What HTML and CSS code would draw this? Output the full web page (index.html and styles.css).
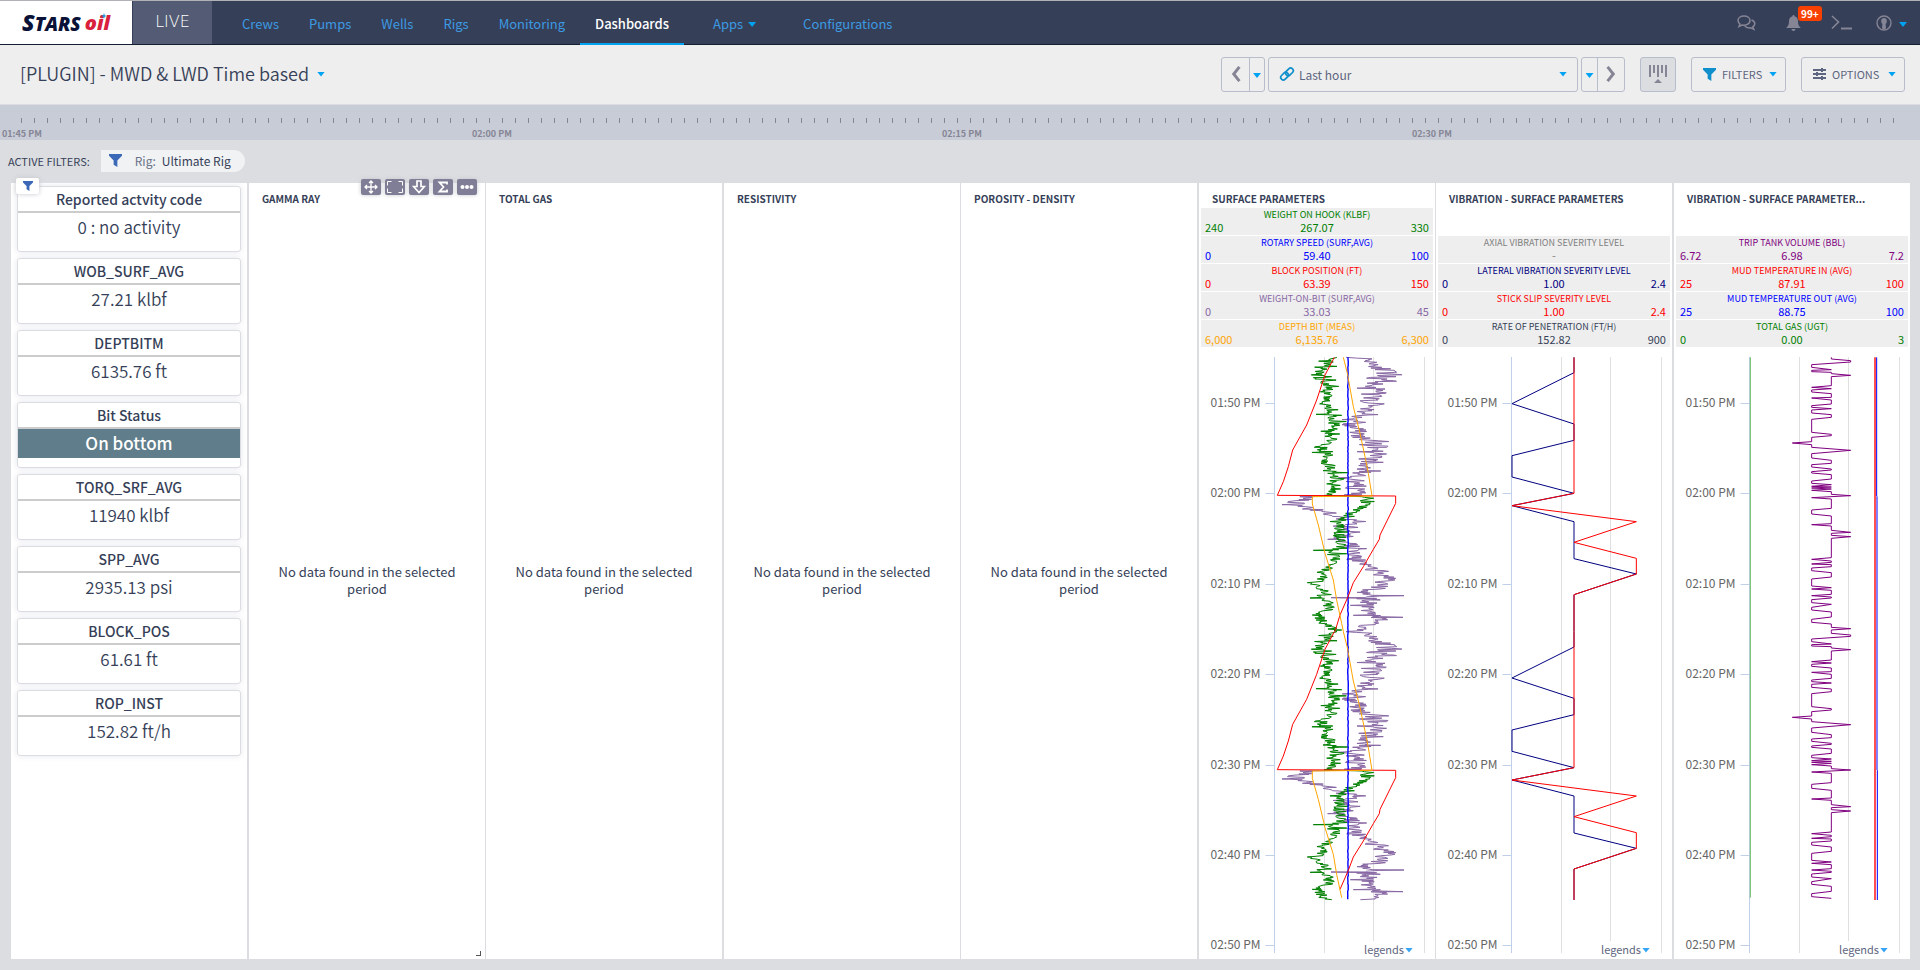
FILE: index.html
```html
<!DOCTYPE html>
<html lang="en">
<head>
<meta charset="utf-8">
<title>MWD &amp; LWD Time based</title>
<link rel="stylesheet" href="styles.css">
</head>
<body>
<svg class="defs" width="0" height="0" aria-hidden="true">
  <symbol id="funnel" viewBox="0 0 14 14"><path d="M0 0h14v2L9 7v7l-4-2.500V7L0 2z"/></symbol>
  <symbol id="left" viewBox="0 0 10 14"><path d="M8 .8 3 7l5 6.200" fill="none" stroke="currentColor" stroke-width="2.600"/></symbol>
  <symbol id="right" viewBox="0 0 10 14"><path d="M2 .8 7 7l-5 6.200" fill="none" stroke="currentColor" stroke-width="2.600"/></symbol>
</svg>

<header class="topbar">
  <a class="brand" href="#"><span class="brand-main"><span class="brand-cap">S</span>TARS</span><span class="brand-oil">oil</span>
    <svg class="brand-star" viewBox="0 0 8 8"><path d="M4 0l1 3 3 1-3 1-1 3-1-3-3-1 3-1z"/></svg></a>
  <a class="live" href="#">LIVE</a>
  <nav class="nav">
    <a href="#">Crews</a>
    <a href="#">Pumps</a>
    <a href="#">Wells</a>
    <a href="#">Rigs</a>
    <a href="#">Monitoring</a>
    <a href="#" class="active">Dashboards</a>
    <a href="#" class="apps">Apps<i class="caret"></i></a>
    <a href="#">Configurations</a>
  </nav>
  <div class="tools">
    <button type="button" aria-label="Messages"><svg width="19" height="16" viewBox="0 0 19 16" fill="none" stroke="currentColor" stroke-width="1.500"><path d="M7 1C3.500 1 1 3 1 5.500c0 1.500.8 2.700 2 3.500L2 11.500 5 10c3.500.6 8-.8 8-4.500C13 3 10.500 1 7 1z"/><path d="M14.500 5c2 .7 3.300 2 3.300 3.700 0 1.300-.8 2.300-2 3.100l1 2.500-3-1.500c-2.800.4-5-.3-6-2"/></svg></button>
    <button type="button" class="bell" aria-label="Notifications"><svg width="15" height="16" viewBox="0 0 15 16" fill="currentColor"><path d="M7.500 0c.7 0 1 .5 1 1.200C11 1.800 12 3.800 12 6c0 4 1 5 2.500 6.500v.5H.5v-.5C2 11 3 10 3 6c0-2.200 1-4.200 3.500-4.800C6.500.5 6.800 0 7.500 0zM5.500 14h4c0 1.200-.9 2-2 2s-2-.8-2-2z"/></svg><span class="badge">99+</span></button>
    <button type="button" aria-label="Console"><svg width="22" height="15" viewBox="0 0 22 15" fill="none" stroke="currentColor"><path d="M1 1l6.500 6L1 13.500" stroke-width="1.600"/><path d="M10 13.500h11" stroke-width="2"/></svg></button>
    <button type="button" class="user" aria-label="Account"><svg width="16" height="16" viewBox="0 0 16 16"><circle cx="8" cy="8" r="7" fill="none" stroke="currentColor" stroke-width="1.400"/><path d="M8 3c1.800 0 2.800 1.200 2.800 3 0 1.500-.6 2.500-1.200 3l.4 4.500-2 .7-2-.7L6.400 9c-.6-.5-1.200-1.500-1.200-3 0-1.800 1-3 2.800-3z" fill="currentColor"/></svg><i class="caret"></i></button>
  </div>
</header>

<section class="toolbar">
  <h1>[PLUGIN] - MWD &amp; LWD Time based<i class="caret"></i></h1>
  <div class="period">
    <div class="group">
      <button type="button" class="arrow" aria-label="Previous"><svg width="12" height="16"><use href="#left"/></svg></button>
      <button type="button" class="drop" aria-label="Previous options"><i class="caret"></i></button>
    </div>
    <label class="range">
      <svg width="16" height="16" viewBox="0 0 16 16" fill="none" stroke="currentColor" stroke-width="1.700"><rect x="-3.800" y="-2.600" width="8.600" height="5.200" rx="2.600" transform="translate(5.200 10.500) rotate(-45)"/><rect x="-4.800" y="-2.600" width="8.600" height="5.200" rx="2.600" transform="translate(10.800 5.500) rotate(-45)"/></svg>
      <select aria-label="Time range"><option>Last hour</option></select>
      <i class="caret"></i>
    </label>
    <div class="group">
      <button type="button" class="drop" aria-label="Next options"><i class="caret"></i></button>
      <button type="button" class="arrow" aria-label="Next"><svg width="12" height="16"><use href="#right"/></svg></button>
    </div>
  </div>
  <button type="button" class="btn ruler" aria-label="Timeline"><svg width="20" height="20" viewBox="0 0 20 20" fill="currentColor"><path d="M1 1h2v12H1zM5 1h2v8H5zM9 1h2v12H9zM13 1h2v8h-2zM17 1h2v12h-2zM10 15l4 4H6z"/></svg></button>
  <button type="button" class="btn filters"><svg width="13" height="13"><use href="#funnel"/></svg>FILTERS<i class="caret"></i></button>
  <button type="button" class="btn options"><svg width="13" height="12" viewBox="0 0 13 12" fill="currentColor"><path d="M0 1h13v2H0zM0 5h13v2H0zM0 9h13v2H0zM8 0h2v4H8zM3 4h2v4H3zM8 8h2v4H8z"/></svg>OPTIONS<i class="caret"></i></button>
</section>

<section class="timeline">
  <div class="ticks"></div>
  <div class="times"><span>01:45 PM</span><span>02:00 PM</span><span>02:15 PM</span><span>02:30 PM</span></div>
</section>

<section class="active-filters">
  <span>ACTIVE FILTERS:</span>
  <div class="chip"><svg width="13" height="13"><use href="#funnel"/></svg><span class="key">Rig:</span><span>Ultimate Rig</span></div>
</section>

<main class="board">
  <div class="pair">
    <section class="panel cards">
      <div class="tab"><svg width="10" height="10"><use href="#funnel"/></svg></div>
      <article class="card"><h3>Reported actvity code</h3><p>0 : no activity</p></article>
      <article class="card"><h3>WOB_SURF_AVG</h3><p>27.21 klbf</p></article>
      <article class="card"><h3>DEPTBITM</h3><p>6135.76 ft</p></article>
      <article class="card on"><h3>Bit Status</h3><p>On bottom</p></article>
      <article class="card"><h3>TORQ_SRF_AVG</h3><p>11940 klbf</p></article>
      <article class="card"><h3>SPP_AVG</h3><p>2935.13 psi</p></article>
      <article class="card"><h3>BLOCK_POS</h3><p>61.61 ft</p></article>
      <article class="card"><h3>ROP_INST</h3><p>152.82 ft/h</p></article>
    </section>
    <section class="panel">
      <h2>GAMMA RAY</h2>
      <div class="panel-tools">
        <button type="button" aria-label="Move"><svg width="16" height="14" viewBox="0 0 16 14" fill="none" stroke="currentColor" stroke-width="1.300"><path d="M8 1v12M2 7h12M6 3l2-2 2 2M6 11l2 2 2-2M4 5L2 7l2 2M12 5l2 2-2 2"/></svg></button>
        <button type="button" aria-label="Expand"><svg width="16" height="12" viewBox="0 0 16 12" fill="none" stroke="currentColor"><path d="M.5 4.500v-4h4M11.500.5h4v4M15.500 7.500v4h-4M4.500 11.500h-4v-4"/></svg></button>
        <button type="button" aria-label="Download"><svg width="14" height="14" viewBox="0 0 14 14" fill="none" stroke="currentColor" stroke-width="1.700"><path d="M5 1h4v5.500h3.500L7 12.500 1.500 6.500H5z"/></svg></button>
        <button type="button" aria-label="Sum"><svg width="12" height="12" viewBox="0 0 12 12" fill="none" stroke="currentColor" stroke-width="1.800"><path d="M10 3.500V1.500H2.500L6.500 6l-4 4.500H10v-2"/></svg></button>
        <button type="button" aria-label="More"><svg width="14" height="4" viewBox="0 0 14 4" fill="currentColor"><circle cx="2.500" cy="2" r="2"/><circle cx="7" cy="2" r="2"/><circle cx="11.500" cy="2" r="2"/></svg></button>
      </div>
      <p class="empty">No data found in the selected period</p>
      <i class="resize"></i>
    </section>
  </div>
  <div class="pair">
    <section class="panel"><h2>TOTAL GAS</h2><p class="empty">No data found in the selected period</p></section>
    <section class="panel"><h2>RESISTIVITY</h2><p class="empty">No data found in the selected period</p></section>
  </div>
  <div class="pair">
    <section class="panel"><h2>POROSITY - DENSITY</h2><p class="empty">No data found in the selected period</p></section>
    <section class="panel">
      <h2>SURFACE PARAMETERS</h2>
      <div class="scales">
        <div class="scale green"><b>WEIGHT ON HOOK (KLBF)</b><span>240</span><span>267.07</span><span>330</span></div>
        <div class="scale blue"><b>ROTARY SPEED (SURF,AVG)</b><span>0</span><span>59.40</span><span>100</span></div>
        <div class="scale red"><b>BLOCK POSITION (FT)</b><span>0</span><span>63.39</span><span>150</span></div>
        <div class="scale violet"><b>WEIGHT-ON-BIT (SURF,AVG)</b><span>0</span><span>33.03</span><span>45</span></div>
        <div class="scale orange"><b>DEPTH BIT (MEAS)</b><span>6,000</span><span>6,135.76</span><span>6,300</span></div>
      </div>
      <svg class="chart" data-chart="surface"></svg>
      <button type="button" class="legends">legends<i class="caret"></i></button>
    </section>
  </div>
  <div class="pair">
    <section class="panel">
      <h2>VIBRATION - SURFACE PARAMETERS</h2>
      <div class="scales">
        <div class="scale gray"><b>AXIAL VIBRATION SEVERITY LEVEL</b><span></span><span>-</span><span></span></div>
        <div class="scale navy"><b>LATERAL VIBRATION SEVERITY LEVEL</b><span>0</span><span>1.00</span><span>2.4</span></div>
        <div class="scale red"><b>STICK SLIP SEVERITY LEVEL</b><span>0</span><span>1.00</span><span>2.4</span></div>
        <div class="scale slate"><b>RATE OF PENETRATION (FT/H)</b><span>0</span><span>152.82</span><span>900</span></div>
      </div>
      <svg class="chart" data-chart="vibration"></svg>
      <button type="button" class="legends">legends<i class="caret"></i></button>
    </section>
    <section class="panel">
      <h2>VIBRATION - SURFACE PARAMETER...</h2>
      <div class="scales">
        <div class="scale purple"><b>TRIP TANK VOLUME (BBL)</b><span>6.72</span><span>6.98</span><span>7.2</span></div>
        <div class="scale red"><b>MUD TEMPERATURE IN (AVG)</b><span>25</span><span>87.91</span><span>100</span></div>
        <div class="scale blue"><b>MUD TEMPERATURE OUT (AVG)</b><span>25</span><span>88.75</span><span>100</span></div>
        <div class="scale green"><b>TOTAL GAS (UGT)</b><span>0</span><span>0.00</span><span>3</span></div>
      </div>
      <svg class="chart" data-chart="mud"></svg>
      <button type="button" class="legends">legends<i class="caret"></i></button>
    </section>
  </div>
</main>
<script src="charts.js"></script>
</body>
</html>
```
FILE: charts.js
```js
// Track charts: time runs downwards, each series is a list of [x, y] in thirds of a pixel.
const NS = 'http://www.w3.org/2000/svg';
const PERIOD = 823;
const START = 52;
const END = 1680;

let seed = 11;
function rnd() {
  seed = (seed * 16807) % 2147483647;
  return seed / 2147483647;
}

function parse(text) {
  return text.trim().split(/\s+/).map(p => p.split(',').map(Number));
}

// Repeats one cycle until the end of the recorded period.
function repeat(points) {
  const out = [];
  for (let shift = 0; shift < END; shift += PERIOD) {
    for (const [x, y] of points) {
      if (y + shift <= END) out.push([x, y + shift]);
    }
  }
  return out;
}

// Adds signal noise around a list of centre points.
function noisy(centres, amp, spikes) {
  const out = [];
  for (let i = 0; i < centres.length - 1; i++) {
    const [x0, y0] = centres[i];
    const [x1, y1] = centres[i + 1];
    for (let y = y0; y < y1; y += 2.3) {
      const t = (y - y0) / (y1 - y0);
      const r = rnd() * 2 - 1;
      const gain = rnd() > 0.8 ? 1.6 : 0.8;
      out.push([x0 + (x1 - x0) * t + r * amp * gain, y]);
    }
  }
  return out.concat(spikes).sort((a, b) => a[1] - b[1]);
}

const CHARTS = {
  surface(line) {
    const violet = noisy(parse('500,52 540,60 560,75 590,95 560,110 565,125 550,140 560,160 540,180 555,195 530,210 520,225 485,240 480,255 505,270 500,285 530,300 565,320 560,335 570,350 550,360 520,372 530,385 510,400 495,420 500,440 490,460 490,467'), 40, parse('620,97 610,122 456,254 590,322 572,393'))
      .concat(noisy(parse('335,470 330,480 315,492 330,500 380,510 415,520 435,530 475,540 480,560 485,580 460,600 480,612 490,625 490,640 490,660 510,670 540,685 570,700 600,715 575,730 560,745 520,757 560,766 530,780 540,800 540,815 570,830 565,840 530,860 490,875'), 36, parse('276,494 365,478 413,598 530,626 642,767 423,773 500,776 490,826 639,832')));
    line(repeat(violet), '#8868a4');
    const green = noisy(parse('432,52 415,70 400,85 388,100 390,110 400,118 405,130 415,160 410,180 420,200 425,222 430,240 435,260 425,275 420,290 418,305 395,320 400,335 415,345 410,370 430,385 435,400 430,420 440,440 425,455 420,467'), 24, parse('370,113 378,223 455,226 373,322 474,398'))
      .concat(noisy(parse('510,470 525,480 530,495 510,505 480,520 455,540 450,560 445,580 455,600 450,620 430,632 440,650 430,670 410,690 400,710 375,730 400,750 390,770 415,790 418,810 385,825 395,840 420,860 432,875'), 22, parse('370,631 352,728 360,774 367,825 455,870')));
    line(repeat(green), '#008000');
    const blue = [];
    for (let y = START; y <= END; y += 6) blue.push([474 + (rnd() * 2 - 1), y]);
    line(blue, '#0000ff', 1.4);
    line(repeat(parse('433,52 405,105 380,180 350,255 308,330 295,380 280,425 262,466 617,468 617,490 570,585 568,598 550,628 520,680 490,728 475,768 450,825 435,874')), '#ff0000');
    line(repeat(parse('460,52 472,100 490,200 510,280 525,350 535,400 546,468 367,470 367,492 385,555 405,640 430,720 440,780 455,850 460,874')), '#ffa500');
  },
  vibration(line) {
    line(repeat(parse('462,52 462,98 276,191 462,252 462,301 276,347 276,411 462,460 276,497 462,545 462,656 649,702 462,764 462,874')).concat([[462, END]]), '#000080');
    line(repeat(parse('462,52 462,460 276,497 649,545 462,607 649,655 649,702 462,764 462,874')).concat([[462, END]]), '#ff0000');
  },
  mud(line) {
    const steps = 'R52 R57 S62 S66 L74 L82 R89 L91 L95 R97 R101 S106 R110 R137 L142 R146 L150 L156 R161 R172 L174 R180 R192 L197 L202 R206 L210 L219 R224 R232 L238 L277 R283 R287 L292 L305 K309 L314 L322 S331 L341 L354 R361 R370 L374 L381 R387 R390 L395 L399 R404 R417 L423 L430 R434 L439 R441 L444 R447 L451 R455 R463 S467 L473 R477 R505 L510 L522 R528 R551 L554 R558 R571 S577 R580 R586 S590 R595 R653 L658 R663 R667 L672 R674 R680 L684 L692 R698 R711 L717 L738 R743 L747 R751 R763 L767 R771 R774 L779 L788 R793 L802 L810 R816 R831 L838 L847 R852 R862 S866 R870';
    const level = { K: 397, L: 455, R: 514, S: 572 };
    line(repeat(steps.split(' ').map(s => [level[s[0]], Number(s.slice(1))])), '#800080');
    line([[271, START], [271, 1673]], '#66b866');
    line([[645, START], [645, END]], '#ff5050', 2);
    line([[650, START], [650, 468], [651, 469], [651, 1290], [652, 1291], [652, END]], '#0000ff');
  }
};

// Distance in pixels from each panel's left edge to the zero of its plot data.
const OFFSETS = { surface: -9, vibration: -16, mud: -14 };
const TOP = 10;

function add(svg, name, attrs, text) {
  const el = document.createElementNS(NS, name);
  for (const key in attrs) el.setAttribute(key, attrs[key]);
  if (text) el.textContent = text;
  svg.appendChild(el);
}

document.querySelectorAll('.chart').forEach(svg => {
  const k = svg.clientWidth / 236;
  const bottom = svg.clientHeight - 6;
  const name = svg.dataset.chart;
  [125, 174, 225].forEach(x => {
    const gx = Math.round(x * k) + 0.5;
    add(svg, 'line', { x1: gx, x2: gx, y1: TOP, y2: bottom, stroke: '#e0e0e0' });
  });
  const ax = Math.round(75 * k) + 0.5;
  add(svg, 'line', { x1: ax, x2: ax, y1: TOP, y2: bottom, stroke: '#c0d0e8' });
  ['01:50', '02:00', '02:10', '02:20', '02:30', '02:40', '02:50'].forEach((t, i) => {
    const y = Math.round(56 + i * 90.4) + 0.5;
    add(svg, 'line', { x1: ax - 9, x2: ax, y1: y, y2: y, stroke: '#c0d0e8' });
    add(svg, 'text', { x: ax - 14, y: y + 3.5, 'text-anchor': 'end', class: 'time' }, t + ' PM');
  });
  CHARTS[name]((points, color, width = 1) => {
    const d = points.map(([x, y]) => ((x / 3 + OFFSETS[name]) * k).toFixed(2) + ',' + (y / 3 - 7).toFixed(2)).join(' ');
    add(svg, 'polyline', { points: d, fill: 'none', stroke: color, 'stroke-width': width });
  });
});
```
FILE: styles.css
```css
* { box-sizing: border-box; }
body {
  margin: 0;
  min-height: 100vh;
  display: flex;
  flex-direction: column;
  background: #dcdde1;
  color: #363f58;
  font-family: "Noto Sans CJK SC", "Open Sans", sans-serif;
  font-size: 13px;
}
h1, h2, h3, p { margin: 0; font-weight: 400; }
a { color: inherit; text-decoration: none; }
button { font: inherit; color: inherit; background: none; border: 0; padding: 0; cursor: pointer; }
svg { display: block; }
.defs { position: absolute; }
use { fill: currentColor; }
.caret {
  display: inline-block;
  width: 8px;
  height: 5px;
  background: #00a2f2;
  clip-path: polygon(0 0, 100% 0, 50% 100%);
  flex: none;
}

.topbar {
  display: flex;
  height: 45px;
  background: #363f58;
  border-top: 1px solid #b0b2b6;
  border-bottom: 1px solid #151d33;
}
.brand {
  position: relative;
  width: 132px;
  display: flex;
  align-items: center;
  justify-content: center;
  gap: 4px;
  background: #fff;
  color: #0b1238;
  font: italic 800 19px/22px "Open Sans", sans-serif;
}
.brand-cap { font-size: 23px; }
.brand-oil { color: #d9203c; font-size: 20px; }
.brand-star { position: absolute; left: 101px; top: 12px; width: 6px; height: 6px; fill: #1b9be0; }
.live {
  width: 79px;
  margin-left: 1px;
  display: flex;
  align-items: center;
  justify-content: center;
  padding-bottom: 1px;
  background: #535c74;
  color: #fff;
  font: 200 16px/20px "DejaVu Sans", sans-serif;
}
.nav { display: flex; margin-left: 15px; color: #3c9ae2; }
.nav a { display: flex; align-items: center; padding: 0 15px; height: 44px; }
.nav .active { color: #fff; font-weight: 500; border-bottom: 2px solid #00a2f2; padding-top: 2px; }
.nav .apps { padding: 0 32px 0 29px; }
.nav .caret { margin-left: 5px; margin-top: 3px; }
.tools { margin-left: auto; display: flex; align-items: center; gap: 30px; padding-right: 13px; color: #858595; }
.bell { position: relative; }
.badge {
  position: absolute;
  left: 12px;
  top: -9px;
  padding: 0 3px;
  border-radius: 3px;
  background: #f84000;
  color: #fff;
  font: 700 10px/15px "Noto Sans CJK SC", sans-serif;
}
.user { display: flex; align-items: center; gap: 7px; margin-left: -7px; }
.user .caret { margin-top: 4px; }

.toolbar {
  display: flex;
  align-items: center;
  height: 60px;
  padding: 0 15px 1px 20px;
  background: #eee;
  border-bottom: 1px solid #dcdde1;
}
h1 { display: flex; align-items: center; gap: 8px; padding-bottom: 2px; font-size: 18px; line-height: 24px; font-weight: 350; }
h1 .caret { margin-top: 2px; }
.period { display: flex; gap: 3px; margin-left: auto; }
.group, .range, .btn { height: 35px; border: 1px solid #b8bdcb; border-radius: 3px; }
.group { display: flex; color: #858595; }
.group button { display: flex; align-items: center; justify-content: center; }
.group button + button { border-left: 1px solid #b8bdcb; }
.arrow { width: 27px; }
.drop { width: 15px; }
.drop .caret { margin-top: 3px; }
.range { display: flex; align-items: center; width: 310px; padding: 0 10px; gap: 4px; color: #0f8fcc; }
.range select { flex: 1; appearance: none; border: 0; background: none; padding: 1px 0 0; color: #5d6580; font: inherit; font-size: 12px; line-height: 18px; }
.btn { display: flex; align-items: center; gap: 6px; margin-left: 15px; padding: 0 8px 0 11px; font-size: 11px; color: #5d6580; }
.btn .caret { margin-left: auto; }
.filters { width: 95px; }
.filters svg { color: #0f8fcc; }
.options { width: 104px; }
.ruler { width: 36px; padding: 0 0 0 7px; background: #dcdde1; color: #858595; }

.timeline { height: 35px; padding-top: 13px; background: #c8ccd6; }
.ticks {
  height: 5px;
  margin: 0 26px 0 21px;
  background: repeating-linear-gradient(90deg, #858595 0 1px, transparent 1px 13px);
}
.times { display: flex; padding: 5px 0 0 2px; color: #858595; font-size: 9px; line-height: 12px; font-weight: 700; }
.times span { flex: 0 0 470px; }

.active-filters { display: flex; align-items: center; height: 43px; padding: 0 8px 2px; gap: 11px; font-size: 11px; }
.chip {
  display: flex;
  align-items: center;
  height: 22px;
  padding: 0 14px 0 8px;
  gap: 6px;
  border-radius: 0 11px 11px 0;
  background: #f0f2f4;
  font-size: 12px;
}
.chip svg, .tab svg { color: #3c68b8; }
.chip .key { margin-left: 7px; color: #6b7288; }

.board { flex: 1; display: grid; grid-template-columns: repeat(4, 1fr); gap: 1px; margin: 0 10px 11px 11px; }
.pair { display: grid; grid-template-columns: 1fr 1fr; gap: 2px; }
.panel { position: relative; display: flex; flex-direction: column; background: #fff; min-width: 0; }
.panel h2 { padding: 9px 13px 0; font-size: 10px; line-height: 14px; font-weight: 700; white-space: nowrap; }

.cards { padding: 3px 6px 0; gap: 6px; }
.card {
  height: 66px;
  border: 1px solid #dcdde1;
  border-radius: 3px;
  box-shadow: 0 0 6px #e4e6ec;
  text-align: center;
}
.card h3 { height: 26px; border-bottom: 2px solid #ccc; font-size: 14px; line-height: 25px; font-weight: 500; }
.card p { padding-bottom: 2px; font-size: 17px; line-height: 27px; font-weight: 350; }
.on p { background: #607d8b; color: #fff; font-weight: 500; }
.tab {
  position: absolute;
  left: 5px;
  top: -5px;
  width: 23px;
  height: 16px;
  display: flex;
  align-items: center;
  justify-content: center;
  border-radius: 2px;
  background: #fff;
  box-shadow: 0 0 5px #c4c6cc;
}

.panel-tools { position: absolute; right: 8px; top: -4px; display: flex; gap: 4px; }
.panel-tools button {
  width: 20px;
  height: 16px;
  display: flex;
  align-items: center;
  justify-content: center;
  border-radius: 2px;
  background: #7f7e96;
  color: #fff;
  box-shadow: 0 0 4px #c4c6cc;
}
.empty { margin: auto; padding: 0 24px 6px; font-size: 13px; line-height: 17px; text-align: center; }
.resize { position: absolute; right: 4px; bottom: 3px; width: 5px; height: 5px; border: solid #555; border-width: 0 1px 1px 0; }

.scales { height: 141px; padding: 0 2px; display: flex; flex-direction: column; justify-content: flex-end; gap: 1px; }
.scale {
  display: grid;
  grid-template-columns: 1fr 1fr 1fr;
  align-content: start;
  height: 27px;
  padding: 0 4px;
  background: #eee;
  font-size: 11px;
  line-height: 11px;
  text-align: center;
}
.scale b { grid-column: 1 / -1; font-size: 9px; line-height: 14px; font-weight: 400; }
.scale b + span { text-align: left; }
.scale span:last-child { text-align: right; }
.green { color: #008000; }
.blue { color: #0000ff; }
.red { color: #ff0000; }
.violet { color: #8868a4; }
.orange { color: #ffa500; }
.gray { color: #808080; }
.navy { color: #000080; }
.slate { color: #363f58; }
.purple { color: #800080; }

.chart { flex: 1; width: 100%; min-height: 400px; }
.time { font: 12px "Noto Sans CJK SC", sans-serif; fill: #666; }
.legends {
  position: absolute;
  right: 22px;
  bottom: 0;
  display: flex;
  align-items: center;
  gap: 1px;
  padding: 0 0 2px;
  background: #fff;
  color: #5d6580;
  font-size: 11px;
  line-height: 16px;
}
.legends .caret { background: #35a4f4; margin-top: 2px; }
```
